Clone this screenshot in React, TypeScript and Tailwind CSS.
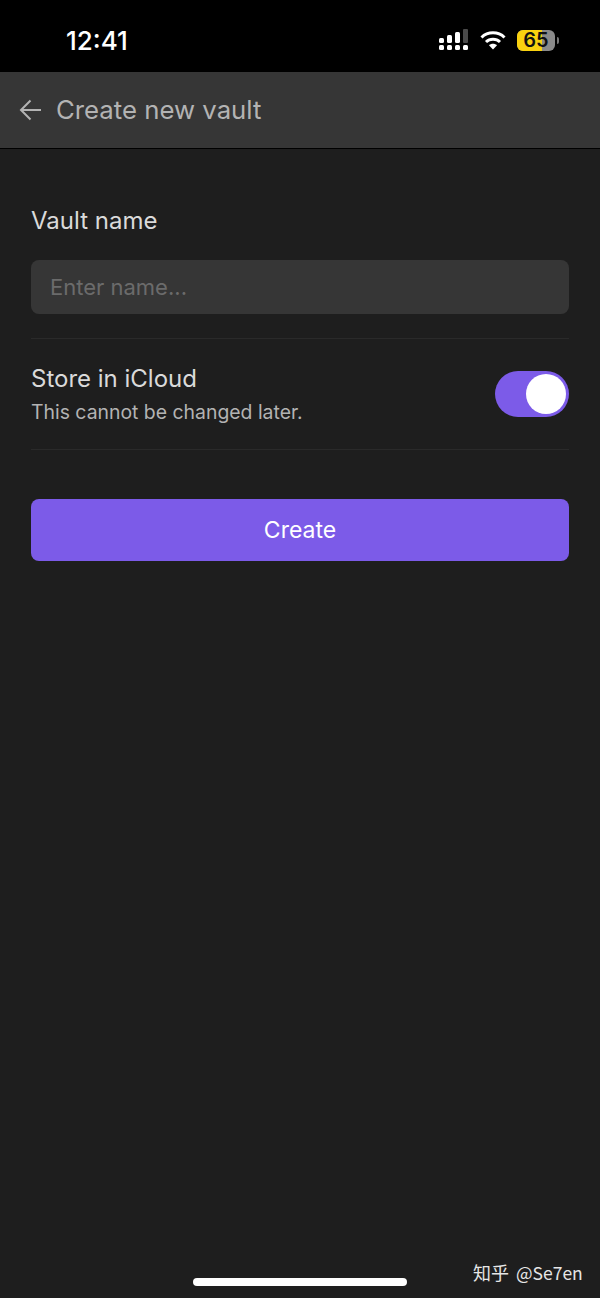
const SignalIcon = () => (
  <svg width="31" height="22" viewBox="0 0 31 22" className="block">
    <rect x="1" y="9" width="5" height="5" rx="1.5" fill="#fff" />
    <rect x="9" y="6" width="5" height="8" rx="1.5" fill="#fff" />
    <rect x="17" y="3" width="5" height="11" rx="1.5" fill="#fff" />
    <rect x="25" y="0" width="5" height="14" rx="1" fill="#4a4a4a" />
    <rect x="1" y="16" width="5" height="5" rx="1.5" fill="#fff" />
    <rect x="9" y="16" width="5" height="5" rx="1.5" fill="#fff" />
    <rect x="17" y="16" width="5" height="5" rx="1.5" fill="#fff" />
    <rect x="25" y="16" width="5" height="5" rx="1.5" fill="#fff" />
  </svg>
);

const WifiIcon = () => (
  <svg width="26" height="20" viewBox="0 0 26 20" fill="none" className="block">
    <path d="M1.5 7.5C7.8 1.3 18.2 1.3 24.5 7.5" stroke="#fff" strokeWidth="3" />
    <path d="M6 12C9.8 8.3 16.2 8.3 20 12" stroke="#fff" strokeWidth="3" />
    <path d="M13 19.5L9 15.3C11.2 13.3 14.8 13.3 17 15.3Z" fill="#fff" />
  </svg>
);

const Battery = () => (
  <div className="flex items-center gap-[2px]">
    <div className="relative h-[21px] w-[38px] rounded-[6px] bg-[#8a8a8a]">
      <div className="absolute inset-y-0 left-0 w-[25px] rounded-l-[6px] bg-[#f9d10f]" />
      <span className="relative block text-center font-['Inter',sans-serif] text-[20px] leading-[21px] font-semibold text-[#111]">
        65
      </span>
    </div>
    <div className="h-[7px] w-[2px] rounded-r-full bg-[#777]" />
  </div>
);

const App = () => {
  return (
    <div className="relative flex h-[1298px] w-[600px] flex-col overflow-hidden bg-[#1e1e1e] font-['Inter',sans-serif]">
      <div className="flex h-[72px] items-center justify-between bg-black pt-[8px] pr-[41px] pl-[66px]">
        <span className="text-[26px] font-medium text-white">12:41</span>
        <div className="flex items-center gap-[11px]">
          <SignalIcon />
          <WifiIcon />
          <Battery />
        </div>
      </div>

      <div className="flex h-[77px] items-center gap-[13px] border-b border-black bg-[#363636] pl-[19px]">
        <svg width="24" height="24" viewBox="0 0 24 24" fill="none" stroke="#b3b3b3" strokeWidth="2" className="block">
          <path d="M22 12H2M11.5 2.5L2 12l9.5 9.5" />
        </svg>
        <span className="pt-[1px] text-[25.75px] text-[#b3b3b3]">Create new vault</span>
      </div>

      <div className="flex flex-col px-[31px] pt-[56px]">
        <label className="text-[24px] leading-[32px] text-[#dadada]">Vault name</label>
        <input
          type="text"
          placeholder="Enter name..."
          className="mt-[23px] h-[54px] rounded-lg bg-[#363636] px-[19px] text-[22px] outline-none placeholder:text-[#6b6b6b]"
        />
        <div className="mt-[24px] border-t border-[#2a2a2a]" />

        <div className="flex h-[111px] items-center justify-between border-b border-[#2a2a2a]">
          <div className="flex flex-col pt-[2px]">
            <span className="text-[24px] leading-[32px] text-[#dadada]">Store in iCloud</span>
            <span className="mt-[2px] text-[19.4px] leading-[30px] text-[#b3b3b3]">This cannot be changed later.</span>
          </div>
          <div className="flex h-[46px] w-[74px] items-center justify-end rounded-full bg-[#7c5be8] pr-[3px]">
            <div className="h-[40px] w-[40px] rounded-full bg-white" />
          </div>
        </div>

        <button className="mt-[49px] flex h-[62px] items-center justify-center rounded-lg bg-[#7c5be8] pt-[1px] text-[23px] text-white">
          Create
        </button>
      </div>

      <div className="absolute top-[1278px] left-[193px] h-[8px] w-[214px] rounded-full bg-white" />
      <span className="absolute top-[1260px] left-[473px] flex gap-[7px] font-['Noto_Sans_CJK_SC',sans-serif] text-[18px] leading-[25px] text-[#e6e6e6]">
        <span>知乎</span>
        <span className="text-[17.5px]">@Se7en</span>
      </span>
    </div>
  );
};

export default App;
